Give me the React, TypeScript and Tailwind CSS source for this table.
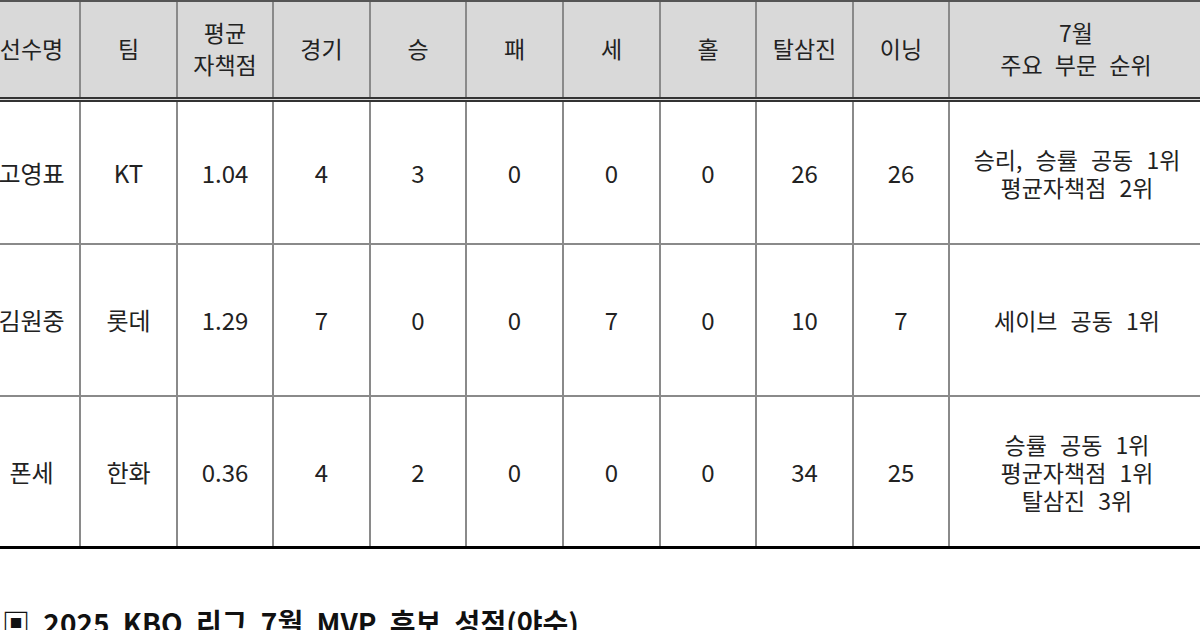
const font = { fontFamily: '"Noto Sans CJK KR", "Noto Sans", sans-serif' };

type Row = { cells: string[]; note: string[]; h: string };

const HEAD = ["선수명", "팀", "평균\n자책점", "경기", "승", "패", "세", "홀", "탈삼진", "이닝", "7월\n주요 부문 순위"];

const ROWS: Row[] = [
  { cells: ["고영표", "KT", "1.04", "4", "3", "0", "0", "0", "26", "26"], note: ["승리, 승률 공동 1위", "평균자책점 2위"], h: "h-[143px]" },
  { cells: ["김원중", "롯데", "1.29", "7", "0", "0", "7", "0", "10", "7"], note: ["세이브 공동 1위"], h: "h-[152px]" },
  { cells: ["폰세", "한화", "0.36", "4", "2", "0", "0", "0", "34", "25"], note: ["승률 공동 1위", "평균자책점 1위", "탈삼진 3위"], h: "h-[152px]" },
];

const GRID = "grid grid-cols-[97px_97px_96px_97px_96px_97px_97px_96px_97px_96px_254px]";

export default function App() {
  return (
    <div className="w-[1200px] h-[630px] overflow-hidden bg-white text-[#222]" style={font}>
      <div className="ml-[-16px] w-[1220px]">
        {/* header */}
        <div className={`${GRID} h-[102px] bg-[#d9d9d9] border-t-2 border-[#555] border-b-[5px] border-b-[#333] [border-bottom-style:double]`}>
          {HEAD.map((h, i) => (
            <div
              key={i}
              className="flex flex-col items-center justify-center pb-[4px] border-r-2 border-[#8a8a8a] text-[23px] leading-[32px] [word-spacing:7px] text-center"
            >
              {h.split("\n").map((l, j) => (
                <span key={j}>{l}</span>
              ))}
            </div>
          ))}
        </div>

        {/* body */}
        {ROWS.map((r, ri) => (
          <div
            key={ri}
            className={`${GRID} ${r.h} ${ri === ROWS.length - 1 ? "border-b-[3px] border-black" : "border-b-2 border-[#8a8a8a]"}`}
          >
            {r.cells.map((c, i) => (
              <div key={i} className="flex items-center justify-center border-r-2 border-[#8a8a8a] text-[24px]">
                {c}
              </div>
            ))}
            <div className="flex flex-col items-center justify-center text-[23px] leading-[28px] [word-spacing:8px]">
              {r.note.map((n, j) => (
                <span key={j}>{n}</span>
              ))}
            </div>
          </div>
        ))}
      </div>

      <div className="mt-[57px] pl-[2px] text-[28px] leading-[32px] font-bold text-[#111] whitespace-nowrap [word-spacing:7px]">
        ▣ 2025 KBO 리그 7월 MVP 후보 성적(야수)
      </div>
    </div>
  );
}
